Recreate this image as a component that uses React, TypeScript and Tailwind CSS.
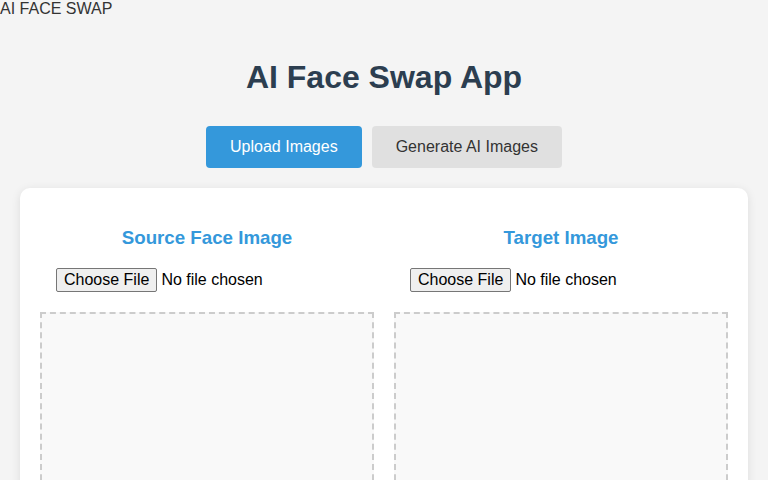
import React, { useState } from 'react';

// Single upload column: heading, file input, dashed preview box
const UploadColumn: React.FC<{ title: string }> = ({ title }) => {
  const [preview, setPreview] = useState<string | null>(null);

  return (
    <div className="flex flex-col">
      <h3 className="text-center text-[18.72px] leading-[21.5px] font-bold text-[#3498db] my-[18.72px]">
        {title}
      </h3>
      <div className="mx-4 mt-px">
        <input
          type="file"
          accept="image/*"
          onChange={(e) => {
            const f = e.target.files?.[0];
            setPreview(f ? f.name : null);
          }}
          className="text-base leading-[18px] text-black file:mr-1 file:px-[7px] file:py-[2px] file:bg-[#efefef] file:border file:border-[#767676] file:rounded-[2px] file:text-black"
        />
      </div>
      <div className="mt-5 h-[300px] border-2 border-dashed border-[#cccccc] bg-[#f9f9f9] flex items-center justify-center">
        {preview && <span className="text-sm text-[#666]">{preview}</span>}
      </div>
    </div>
  );
};

export default function App() {
  const [tab, setTab] = useState<'upload' | 'generate'>('upload');

  return (
    <div className="min-h-screen bg-[#f4f4f4] text-[#333] font-['Liberation_Sans',Arial,sans-serif] text-base leading-[18.4px]">
      <div>AI FACE SWAP</div>
      <div className="pt-5">
        <h1 className="text-center text-[32px] leading-[37px] font-bold text-[#2c3e50] mt-[20.5px] mb-[30px]">
          AI Face Swap App
        </h1>
        <div className="flex justify-center gap-[10px]">
          <button
            onClick={() => setTab('upload')}
            className={`px-6 py-3 rounded leading-[18px] ${tab === 'upload' ? 'bg-[#3498db] text-white' : 'bg-[#e0e0e0] text-[#333]'}`}
          >
            Upload Images
          </button>
          <button
            onClick={() => setTab('generate')}
            className={`px-6 py-3 rounded leading-[18px] ${tab === 'generate' ? 'bg-[#3498db] text-white' : 'bg-[#e0e0e0] text-[#333]'}`}
          >
            Generate AI Images
          </button>
        </div>
        <div className="mx-5 mt-5 bg-white rounded-[10px] shadow-[0_2px_10px_rgba(0,0,0,0.1)] p-5">
          <div className="grid grid-cols-2 gap-5">
            <UploadColumn title="Source Face Image" />
            <UploadColumn title="Target Image" />
          </div>
        </div>
      </div>
    </div>
  );
}
